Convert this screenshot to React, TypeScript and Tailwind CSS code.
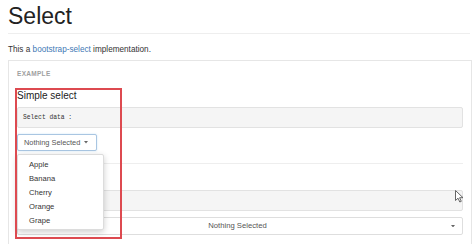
import React from "react";

function Caret() {
  return (
    <svg width="4" height="2.5" viewBox="0 0 4 2.5" className="shrink-0">
      <path d="M0 0 L4 0 L2 2.5 Z" fill="#666" />
    </svg>
  );
}

export default function App() {
  const items = ["Apple", "Banana", "Cherry", "Orange", "Grape"];
  return (
    <div
      className="relative w-[474px] h-[244px] overflow-hidden bg-white text-[#333]"
      style={{ fontFamily: '"Liberation Sans", Arial, sans-serif' }}
    >
      <div className="ml-[8px] w-[464px]">
        <h1 className="mt-[3px] text-[23px] leading-[26px] font-normal text-[#222]">Select</h1>
        <div className="mt-[4px] mr-[2px] border-t border-[#eeeeee]" />
        <p className="mt-[10px] text-[8.2px] leading-[12px]">
          This a <span className="text-[#3f78b5]">bootstrap-select</span> implementation.
        </p>
        <div className="mt-[4px] border border-[#e6e6e6] px-[8px] pt-[9px] pb-[20px]">
          <div className="text-[6.5px] leading-[8px] font-bold tracking-[0.3px] text-[#a0a0a0]">EXAMPLE</div>
          <div className="mt-[12px] text-[10px] leading-[12px] text-[#222]">Simple select</div>
          <div className="mt-[5px] h-[21px] flex items-center bg-[#f5f5f5] border border-[#e2e2e2] rounded-[2px] pl-[5px]">
            <span
              className="text-[6.3px] leading-[8px] text-[#333]"
              style={{ fontFamily: '"Liberation Mono", "Courier New", monospace' }}
            >
              Select data :
            </span>
          </div>
          <div className="relative mt-[6px] w-[80px]">
            <div className="h-[17px] flex items-center gap-[4px] pl-[6px] pr-[6px] bg-white border border-[#a9c6e2] rounded-[2px] shadow-[0_0_2px_rgba(102,175,233,0.35)]">
              <span className="text-[7.4px] leading-[10px] text-[#555] whitespace-nowrap">Nothing Selected</span>
              <Caret />
            </div>
            <div className="absolute left-0 top-[20px] z-10 w-[87px] h-[76px] bg-white border border-[#dcdcdc] rounded-[2px] shadow-[0_2px_6px_rgba(0,0,0,0.2)] pt-[3px]">
              {items.map((it) => (
                <div key={it} className="h-[14px] flex items-center pl-[11px] text-[7.6px] text-[#333]">
                  {it}
                </div>
              ))}
            </div>
          </div>
          <div className="mt-[12px] border-t border-[#eeeeee]" />
          <div className="mt-[26px] h-[21px] bg-[#f5f5f5] border border-[#e2e2e2] rounded-[2px]" />
          <div className="mt-[6px] h-[18px] flex items-center bg-white border border-[#dedede] rounded-[2px] pl-[8px] pr-[7px]">
            <span className="flex-1 text-center text-[7.7px] leading-[10px] text-[#555] pr-[2px]">Nothing Selected</span>
            <Caret />
          </div>
        </div>
      </div>
      <div className="absolute left-[15px] top-[88px] w-[107px] h-[151px] border-2 border-[#dd4a50] z-20 pointer-events-none" />
      <svg className="absolute left-[455px] top-[190px] z-20" width="9" height="13" viewBox="0 0 9 13">
        <path d="M0.5 0.5 L0.5 10.5 L3 8.2 L4.8 12 L6.3 11.3 L4.6 7.7 L8 7.7 Z" fill="#fff" stroke="#555" strokeWidth="0.9" strokeLinejoin="round" />
      </svg>
    </div>
  );
}
